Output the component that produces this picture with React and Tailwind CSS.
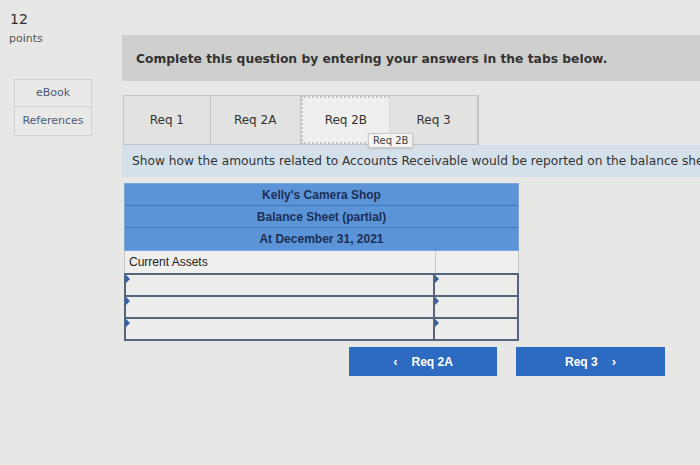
import React from 'react';

const verdana = { fontFamily: '"DejaVu Sans", Verdana, sans-serif' };
const arial = { fontFamily: '"Liberation Sans", Arial, sans-serif' };

function Tab({ label, active, width }) {
  return (
    <div
      className={`h-full flex items-center justify-center text-[12px] text-[#333] border-r border-[#c4c4c2] ${
        active ? 'bg-[#efefed] border-2 border-dotted border-[#6f7fa0]' : 'bg-[#e2e2e0]'
      }`}
      style={{ width }}
    >
      {label}
    </div>
  );
}

function InputRow() {
  return (
    <div className="flex h-[22px] border-b-2 border-[#56657e]">
      <div className="relative flex-1 border-r-2 border-[#56657e] bg-[#ececea]">
        <span className="absolute left-0 top-0 w-0 h-0 border-t-[4px] border-b-[4px] border-l-[4px] border-t-transparent border-b-transparent border-l-[#2f5fa8]" />
      </div>
      <div className="relative w-[82px] bg-[#ececea]">
        <span className="absolute left-0 top-0 w-0 h-0 border-t-[4px] border-b-[4px] border-l-[4px] border-t-transparent border-b-transparent border-l-[#2f5fa8]" />
      </div>
    </div>
  );
}

export default function App() {
  return (
    <div className="w-[700px] h-[465px] bg-[#e7e7e5] flex overflow-hidden" style={verdana}>
      {/* left column */}
      <div className="w-[122px] shrink-0 pt-[11px]">
        <div className="pl-[10px] text-[14px] leading-[16px] text-[#333]">12</div>
        <div className="pl-[9px] text-[11px] leading-[14px] mt-[5px] text-[#555]">points</div>
        <div className="ml-[14px] mt-[33px] w-[78px] border border-[#d2d2d0] bg-[#e9e9e7]">
          <div className="h-[27px] flex items-center justify-center text-[11px] text-[#4a5a78] border-b border-[#d2d2d0]">eBook</div>
          <div className="h-[28px] flex items-center justify-center text-[11px] text-[#4a5a78]">References</div>
        </div>
      </div>

      {/* main column */}
      <div className="flex-1 pt-[35px]">
        <div className="h-[46px] bg-[#cfcfcd] flex items-center pl-[14px] pt-[2px] text-[12.3px] font-bold text-[#333] whitespace-nowrap">
          Complete this question by entering your answers in the tabs below.
        </div>

        <div className="relative mt-[14px] ml-[1px] h-[50px] flex border border-[#c4c4c2] w-[356px]">
          <Tab label="Req 1" width={87} />
          <Tab label="Req 2A" width={90} />
          <Tab label="Req 2B" width={90} active />
          <Tab label="Req 3" width={88} />
          <div className="absolute left-[244px] top-[37px] px-[4px] h-[15px] flex items-center bg-[#f3f3f1] border border-[#c9c9c7] text-[10px] text-[#444] shadow-sm">
            Req 2B
          </div>
        </div>

        <div className="h-[32px] bg-[#d4e0ea] flex items-center pl-[10px] text-[12.2px] text-[#333] whitespace-nowrap overflow-hidden">
          Show how the amounts related to Accounts Receivable would be reported on the balance sheet.
        </div>

        <div className="mt-[6px] ml-[2px] w-[395px]" style={arial}>
          <div className="bg-[#5b95d8] border border-[#7aa6dc] text-[#1d2f55] font-bold text-[12px]">
            <div className="h-[22px] flex items-center justify-center border-b border-[#3f78bf]">Kelly's Camera Shop</div>
            <div className="h-[22px] flex items-center justify-center border-b border-[#3f78bf]">Balance Sheet (partial)</div>
            <div className="h-[22px] flex items-center justify-center">At December 31, 2021</div>
          </div>
          <div className="flex h-[22px] border-x border-[#c8c8c6] bg-[#efefed]">
            <div className="flex-1 flex items-center pl-[4px] text-[12px] text-[#222] border-r border-[#c8c8c6]">Current Assets</div>
            <div className="w-[82px]" />
          </div>
          <div className="border-2 border-b-0 border-[#56657e]">
            <InputRow />
            <InputRow />
            <InputRow />
          </div>
        </div>

        <div className="flex mt-[6px] ml-[227px] gap-[19px]" style={arial}>
          <div className="w-[148px] h-[29px] bg-[#2c6bc1] flex items-center justify-center gap-[14px] text-white font-bold text-[12px]">
            <span className="text-[13px]">‹</span>
            <span>Req 2A</span>
          </div>
          <div className="w-[149px] h-[29px] bg-[#2c6bc1] flex items-center justify-center gap-[14px] text-white font-bold text-[12px]">
            <span>Req 3</span>
            <span className="text-[13px]">›</span>
          </div>
        </div>
      </div>
    </div>
  );
}
